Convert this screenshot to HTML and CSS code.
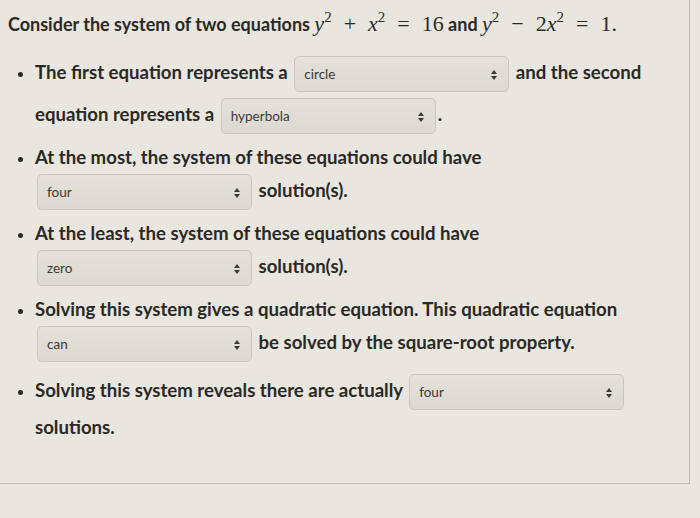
FILE: index.html
```html
<!DOCTYPE html>
<html>
<head>
<meta charset="utf-8">
<link rel="stylesheet" href="styles.css">
</head>
<body>
<div class="panel">
  <p class="intro">Consider the system of two equations <span class="math"><i>y</i><sup>2</sup><span class="op">+</span><i>x</i><sup>2</sup><span class="op">=</span>16</span> and <span class="math"><i>y</i><sup>2</sup><span class="op">−</span>2<i>x</i><sup>2</sup><span class="op">=</span>1.</span></p>
  <ul class="items">
    <li>The first equation represents a <span class="sel">circle<svg class="arr" viewBox="0 0 6 10"><path d="M3 0L6 4H0Z M3 10L6 6H0Z"/></svg></span> and the second equation represents a <span class="sel">hyperbola<svg class="arr" viewBox="0 0 6 10"><path d="M3 0L6 4H0Z M3 10L6 6H0Z"/></svg></span>.</li>
    <li>At the most, the system of these equations could have <span class="sel">four<svg class="arr" viewBox="0 0 6 10"><path d="M3 0L6 4H0Z M3 10L6 6H0Z"/></svg></span> solution(s).</li>
    <li>At the least, the system of these equations could have <span class="sel">zero<svg class="arr" viewBox="0 0 6 10"><path d="M3 0L6 4H0Z M3 10L6 6H0Z"/></svg></span> solution(s).</li>
    <li>Solving this system gives a quadratic equation. This quadratic equation <span class="sel">can<svg class="arr" viewBox="0 0 6 10"><path d="M3 0L6 4H0Z M3 10L6 6H0Z"/></svg></span> be solved by the square-root property.</li>
    <li>Solving this system reveals there are actually <span class="sel">four<svg class="arr" viewBox="0 0 6 10"><path d="M3 0L6 4H0Z M3 10L6 6H0Z"/></svg></span> solutions.</li>
  </ul>
</div>
</body>
</html>
```
FILE: styles.css
```css
html, body {
  margin: 0;
  padding: 0;
  background: #e9e6df;
  height: 100%;
}
body {
  font-family: Lato, "Open Sans", sans-serif;
  font-weight: 700;
  font-size: 18.6px;
  color: #2a2926;
}
.panel {
  width: 690px;
  height: 484px;
  box-sizing: border-box;
  border-right: 1px solid #bcb9b2;
  border-bottom: 1px solid #bcb9b2;
  padding: 10px 20px 0 8px;
}
.intro {
  margin: 0 0 15px 0;
  font-size: 18px;
  line-height: 28px;
}
.math {
  font-family: "Liberation Serif", serif;
  font-weight: 400;
  font-size: 22px;
}
.math i { font-style: italic; }
.math sup {
  font-size: 15px;
  vertical-align: 9px;
  line-height: 0;
}
.op { margin: 0 12px; }
.items {
  margin: 0;
  padding: 0 0 0 27px;
  line-height: 28px;
}
.items li {
  margin-bottom: 6px;
}
.items li::marker { font-size: 16px; }
.sel {
  display: inline-block;
  position: relative;
  box-sizing: border-box;
  width: 215px;
  height: 36px;
  margin: 3px 2px;
  padding: 8px 0 0 9px;
  vertical-align: middle;
  border: 1px solid #c9c6bf;
  border-radius: 5px;
  background: linear-gradient(#e4e1db, #dcd9d3);
  font-weight: 400;
  font-size: 13.5px;
  line-height: 18px;
  color: #3a3936;
}
.arr {
  position: absolute;
  right: 11px;
  top: 13px;
  width: 6px;
  height: 10px;
  fill: #3a3936;
}
```
